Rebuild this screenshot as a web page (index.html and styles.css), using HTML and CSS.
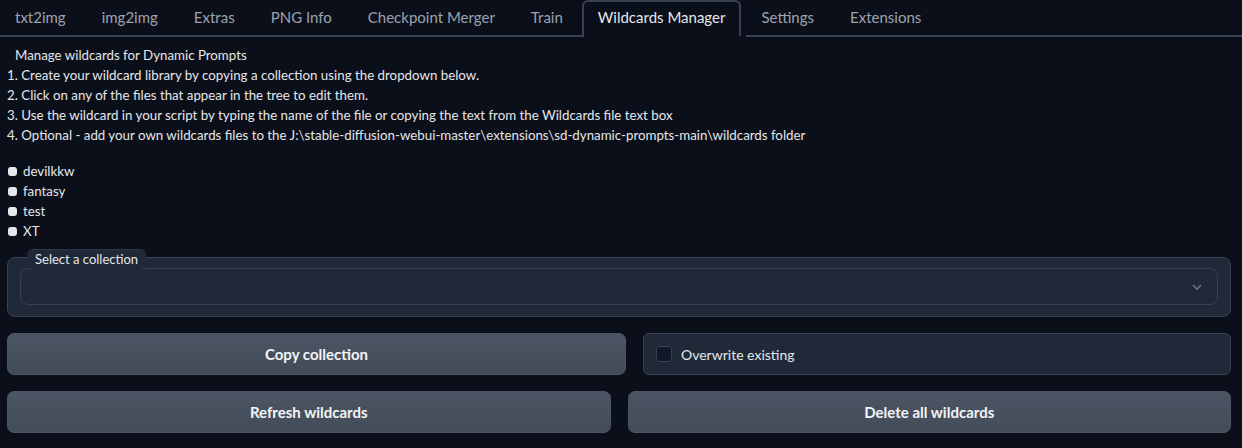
FILE: index.html
```html
<!DOCTYPE html>
<html>
	<head>
		<meta charset="utf-8" />
		<title>Wildcards Manager</title>
		<link rel="stylesheet" href="styles.css">
	</head>
	<body>
		<div class="tabs">
			<a class="tab" href="javascript:;">txt2img</a>
			<a class="tab" href="javascript:;">img2img</a>
			<a class="tab" href="javascript:;">Extras</a>
			<a class="tab" href="javascript:;">PNG Info</a>
			<a class="tab" href="javascript:;">Checkpoint Merger</a>
			<a class="tab" href="javascript:;">Train</a>
			<a class="tab active" href="javascript:;">Wildcards Manager</a>
			<a class="tab" href="javascript:;">Settings</a>
			<a class="tab" href="javascript:;">Extensions</a>
			<div class="tab-rest"></div>
		</div>
		<div class="page">
			<div class="intro">
				<p class="title">Manage wildcards for Dynamic Prompts</p>
				<p>1. Create your wildcard library by copying a collection using the dropdown below.</p>
				<p>2. Click on any of the files that appear in the tree to edit them.</p>
				<p>3. Use the wildcard in your script by typing the name of the file or copying the text from the Wildcards file text box</p>
				<p>4. Optional - add your own wildcards files to the J:\stable-diffusion-webui-master\extensions\sd-dynamic-prompts-main\wildcards folder</p>
			</div>
			<ul class="tree">
				<li><i></i><span>devilkkw</span></li>
				<li><i></i><span>fantasy</span></li>
				<li><i></i><span>test</span></li>
				<li><i></i><span>XT</span></li>
			</ul>
			<div class="block">
				<span class="label">Select a collection</span>
				<div class="dropdown">
					<svg width="12" height="12" viewBox="0 0 12 12"><path d="M2 4 L6 8 L10 4" fill="none" stroke="#6b7280" stroke-width="1.6"/></svg>
				</div>
			</div>
			<div class="row row1">
				<button class="btn">Copy collection</button>
				<label class="check"><i></i><span>Overwrite existing</span></label>
			</div>
			<div class="row row2">
				<button class="btn">Refresh wildcards</button>
				<button class="btn">Delete all wildcards</button>
			</div>
		</div>
	</body>
</html>
```

FILE: styles.css
```css
body,p,ul,li{
	margin: 0;
	padding: 0;
}
ul,li{
	list-style: none;
}
body{
	background: #0b0f19;
	color: #e5e7eb;
	font-family: "Lato", "Liberation Sans", sans-serif;
	font-size: 13.3px;
}
a{
	text-decoration: none;
}
.tabs{
	display: flex;
	height: 37px;
}
.tab{
	display: block;
	height: 35px;
	line-height: 35px;
	padding: 0 21px 0 15px;
	font-size: 15px;
	color: #9ca3af;
	border-bottom: 2px solid #374151;
}
.tab.active{
	color: #e5e7eb;
	border: 2px solid #374151;
	border-bottom: 2px solid transparent;
	border-radius: 6px 6px 0 0;
	height: 33px;
	line-height: 31px;
	padding: 0 14px;
	margin-left: -2px;
	margin-right: 5px;
}
.tab-rest{
	flex: 1;
	border-bottom: 2px solid #374151;
}
.page{
	padding: 8px 11px 0 7px;
}
.intro p{
	line-height: 20px;
}
.intro .title{
	padding-left: 8px;
}
.tree{
	margin-top: 16px;
}
.tree li{
	display: flex;
	align-items: center;
	height: 20px;
}
.tree i{
	width: 9px;
	height: 9px;
	border-radius: 3px;
	background: #e5e7eb;
	margin: 0 6px 0 1px;
}
.block{
	position: relative;
	margin-top: 16px;
	height: 36px;
	padding: 10px 12px 12px 12px;
	background: #1f2937;
	border: 1px solid #374151;
	border-radius: 8px;
}
.label{
	position: absolute;
	left: 19px;
	top: -9px;
	padding: 1px 8px 2px;
	font-size: 13px;
	line-height: 16px;
	background: #1f2937;
	border-radius: 6px;
	border-top: 1px solid #2c3545;
}
.dropdown{
	height: 35px;
	border: 1px solid #374151;
	border-radius: 8px;
	display: flex;
	align-items: center;
	justify-content: flex-end;
	padding-right: 14px;
}
.row{
	display: grid;
	gap: 17px;
	margin-top: 16px;
}
.row1{
	grid-template-columns: 619px 1fr;
}
.row2{
	grid-template-columns: 1fr 1fr;
	margin-top: 16px;
}
.btn{
	height: 42px;
	border: 1px solid #4b5563;
	border-radius: 7px;
	background: linear-gradient(to bottom, #4b5563, #434c59);
	color: #f3f4f6;
	font-family: "Lato", "Liberation Sans", sans-serif;
	font-size: 15px;
	font-weight: bold;
}
.check{
	display: flex;
	align-items: center;
	height: 40px;
	padding-left: 12px;
	background: #1f2937;
	border: 1px solid #374151;
	border-radius: 6px;
	font-size: 14px;
}
.check i{
	width: 14px;
	height: 14px;
	border: 1px solid #374151;
	border-radius: 3px;
	background: #111827;
	margin-right: 9px;
}
```
